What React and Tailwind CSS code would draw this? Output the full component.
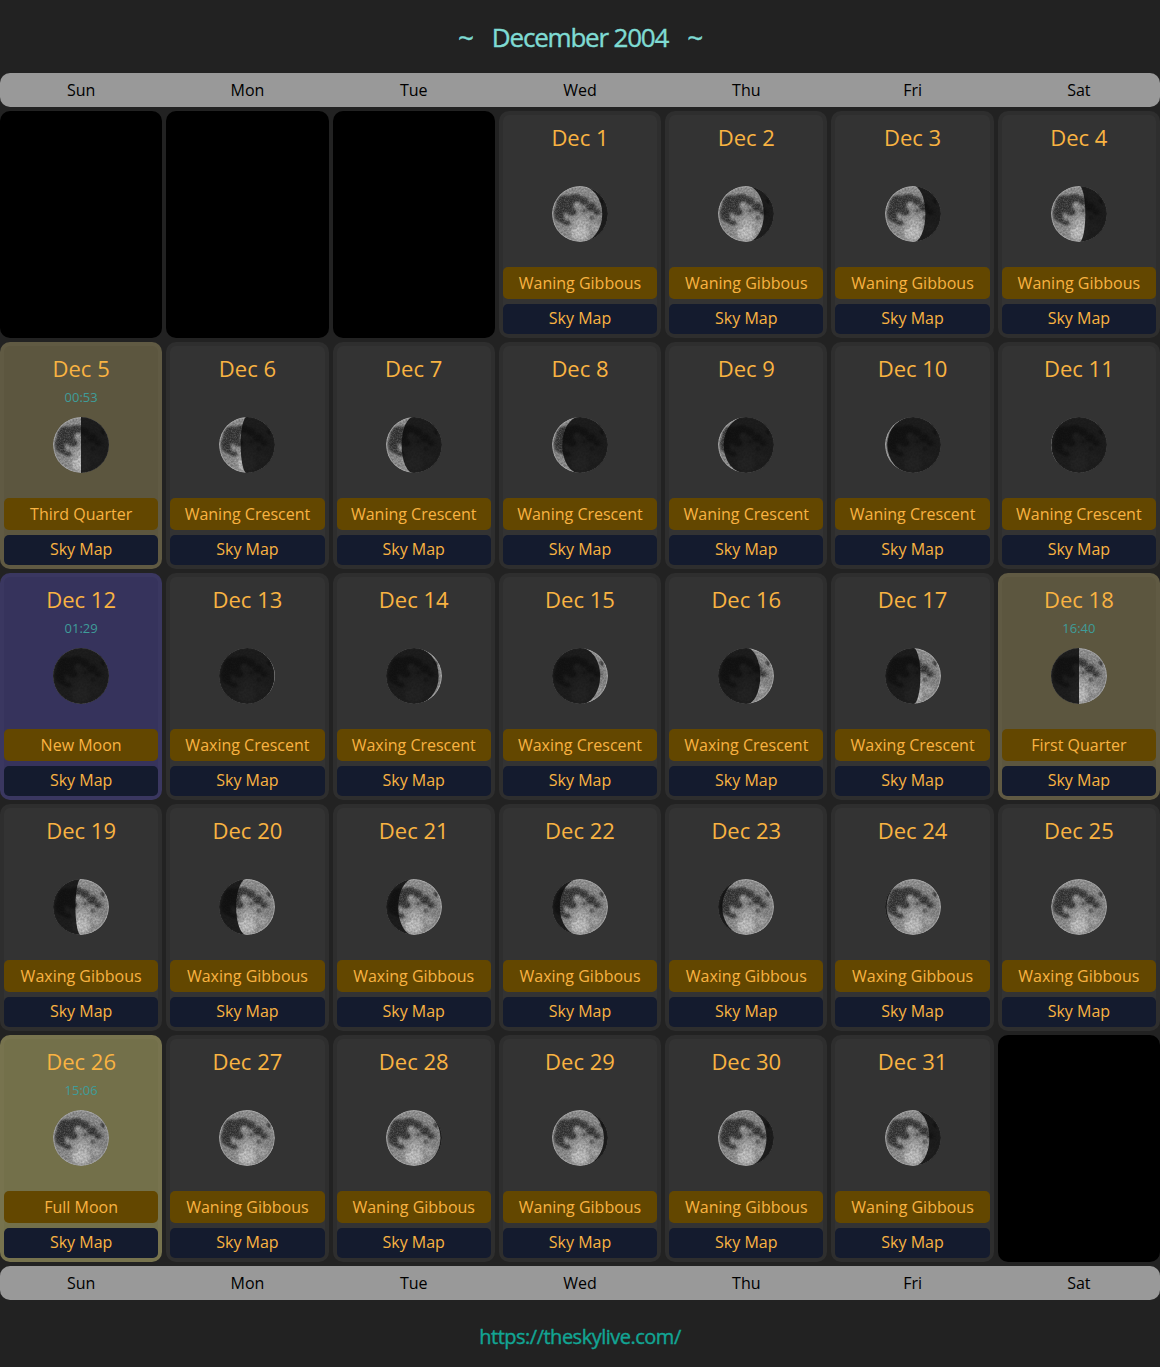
import React from "react";

const WEEK_DAYS = ["Sun", "Mon", "Tue", "Wed", "Thu", "Fri", "Sat"];

// Events that get a tinted cell and a time under the date
const EVENTS = {
  5: { time: "00:53", label: "Third Quarter", cell: "bg-[#5c563f] border-[#605a43]" },
  12: { time: "01:29", label: "New Moon", cell: "bg-[#36335c] border-[#3a3760]" },
  18: { time: "16:40", label: "First Quarter", cell: "bg-[#5c563f] border-[#605a43]" },
  26: { time: "15:06", label: "Full Moon", cell: "bg-[#73704a] border-[#77734e]" },
};

const phaseName = (day) => {
  if (day < 5) return "Waning Gibbous";
  if (day < 12) return "Waning Crescent";
  if (day < 18) return "Waxing Crescent";
  if (day < 26) return "Waxing Gibbous";
  return "Waning Gibbous";
};

// 0 = full, 90 = third quarter, 180 = new, 270 = first quarter
const phaseAngle = (day) => {
  if (day <= 12) return 90 + (day - 5) * 12.86;
  if (day <= 18) return 180 + (day - 12) * 15;
  if (day <= 26) return 270 + (day - 18) * 11.25;
  return (day - 26) * 11;
};

const shadowPath = (angle) => {
  const r = 28.5;
  const rx = Math.abs(Math.cos((angle * Math.PI) / 180)) * r;
  if (angle <= 180) {
    const sweep = angle < 90 ? 0 : 1;
    return `M28 -0.5 A${r} ${r} 0 0 1 28 56.5 A${rx} ${r} 0 0 ${sweep} 28 -0.5Z`;
  }
  const sweep = angle > 270 ? 1 : 0;
  return `M28 -0.5 A${r} ${r} 0 0 0 28 56.5 A${rx} ${r} 0 0 ${sweep} 28 -0.5Z`;
};

const MoonDefs = () => (
  <svg className="absolute w-0 h-0" aria-hidden="true">
    <defs>
      <filter id="moon-soft" x="-20%" y="-20%" width="140%" height="140%">
        <feGaussianBlur stdDeviation="0.8" />
      </filter>
      <filter id="moon-grain" x="0" y="0" width="100%" height="100%">
        <feTurbulence type="fractalNoise" baseFrequency="0.5" numOctaves="2" seed="7" />
        <feColorMatrix values="0 0 0 0 0  0 0 0 0 0  0 0 0 0 0  1.5 0 0 0 -0.5" />
      </filter>
      <filter id="moon-speck" x="0" y="0" width="100%" height="100%">
        <feTurbulence type="fractalNoise" baseFrequency="0.8" numOctaves="2" seed="21" />
        <feColorMatrix values="0 0 0 0 1  0 0 0 0 1  0 0 0 0 1  1.6 0 0 0 -0.6" />
      </filter>
      <radialGradient id="moon-base" cx="50%" cy="72%" r="65%">
        <stop offset="0%" stopColor="#a4a4a4" />
        <stop offset="70%" stopColor="#828282" />
        <stop offset="100%" stopColor="#929292" />
      </radialGradient>
      <clipPath id="moon-clip">
        <circle cx="28" cy="28" r="28" />
      </clipPath>
      <g id="moon-surface" clipPath="url(#moon-clip)">
        <circle cx="28" cy="28" r="28" fill="url(#moon-base)" />
        <g filter="url(#moon-soft)" fill="#363636">
          <ellipse cx="13" cy="18" rx="9" ry="9" />
          <ellipse cx="7" cy="27" rx="5" ry="8" />
          <ellipse cx="23" cy="12" rx="7" ry="4" />
          <ellipse cx="32" cy="15" rx="4.5" ry="4" />
          <ellipse cx="39" cy="21" rx="5" ry="4.5" />
          <ellipse cx="45" cy="26" rx="3.5" ry="3" />
          <ellipse cx="50" cy="15" rx="2" ry="3" />
          <ellipse cx="20" cy="26" rx="4.5" ry="3.5" />
          <ellipse cx="15" cy="37" rx="3.5" ry="2.5" />
          <ellipse cx="10" cy="34" rx="3" ry="3" />
          <ellipse cx="32" cy="25" rx="2" ry="1.5" />
          <ellipse cx="40" cy="32" rx="1.5" ry="2" />
        </g>
        <g filter="url(#moon-soft)" fill="#cacaca">
          <ellipse cx="28" cy="47" rx="9" ry="7" opacity="0.8" />
          <ellipse cx="30" cy="37" rx="7" ry="5" opacity="0.4" />
          <ellipse cx="44" cy="42" rx="5" ry="4" opacity="0.35" />
          <ellipse cx="25" cy="19" rx="2" ry="2" opacity="0.5" />
        </g>
        <rect width="56" height="56" fill="#000" filter="url(#moon-grain)" opacity="0.35" />
        <rect width="56" height="56" filter="url(#moon-speck)" opacity="0.25" />
        <circle cx="28" cy="28" r="27.4" fill="none" stroke="#b5b5b5" strokeOpacity="0.55" strokeWidth="1.2" />
      </g>
    </defs>
  </svg>
);

const Moon = ({ day }) => (
  <svg viewBox="0 0 56 56" className="w-14 h-14 block mx-auto" aria-hidden="true">
    <use href="#moon-surface" />
    <path d={shadowPath(phaseAngle(day))} fill="#0c0c0c" fillOpacity="0.88" clipPath="url(#moon-clip)" />
  </svg>
);

const HeaderRow = () => (
  <div className="grid grid-cols-7 gap-1 h-[34px] rounded-[10px] bg-[#999999] text-black text-base leading-[34px] text-center">
    {WEEK_DAYS.map((name) => (
      <div key={name}>{name}</div>
    ))}
  </div>
);

const DayCell = ({ day }) => {
  const event = EVENTS[day];
  return (
    <div
      className={`flex flex-col h-[227px] rounded-[10px] border-4 text-[#f9b342] text-center ${
        event ? event.cell : "bg-[#333333] border-[#2e2e2e]"
      }`}
    >
      <div className="mt-[7px] h-[30px] text-[22px] leading-[30px]">Dec {day}</div>
      <div className="mt-[4px] h-[20px] text-[13px] leading-[20px] text-[#3f9c99]">{event?.time}</div>
      <div className="mt-[10px]">
        <Moon day={day} />
      </div>
      <div className="mt-auto h-[32px] rounded-[5px] bg-[#634700] text-base leading-[32px]">
        {event ? event.label : phaseName(day)}
      </div>
      <div className="mt-[5px] h-[30px] rounded-[5px] bg-[#141b2e] text-base leading-[28px]">Sky Map</div>
    </div>
  );
};

const EmptyCell = () => <div className="h-[227px] rounded-[10px] bg-black" />;

export default function App() {
  const days = Array.from({ length: 31 }, (_, i) => i + 1);

  return (
    <div className="min-h-[1367px] bg-[#222222] font-['Open_Sans',sans-serif]">
      <MoonDefs />
      {/* Title */}
      <div className="flex justify-center gap-[19px] pt-[19px] h-[73px] text-[26px] leading-[36px] text-[#7fdbd3] tracking-[-1.2px] [-webkit-text-stroke:0.4px_#7fdbd3]">
        <span className="text-[28px]">~</span>
        <span>December 2004</span>
        <span className="text-[28px]">~</span>
      </div>
      <HeaderRow />
      {/* Calendar */}
      <div className="grid grid-cols-7 gap-1 my-1">
        <EmptyCell />
        <EmptyCell />
        <EmptyCell />
        {days.map((day) => (
          <DayCell key={day} day={day} />
        ))}
        <EmptyCell />
      </div>
      <HeaderRow />
      <div className="pt-[23px] text-center text-[20px] leading-[27px] text-[#12a594] tracking-[-0.5px] [-webkit-text-stroke:0.4px_#12a594]">
        https://theskylive.com/
      </div>
    </div>
  );
}
